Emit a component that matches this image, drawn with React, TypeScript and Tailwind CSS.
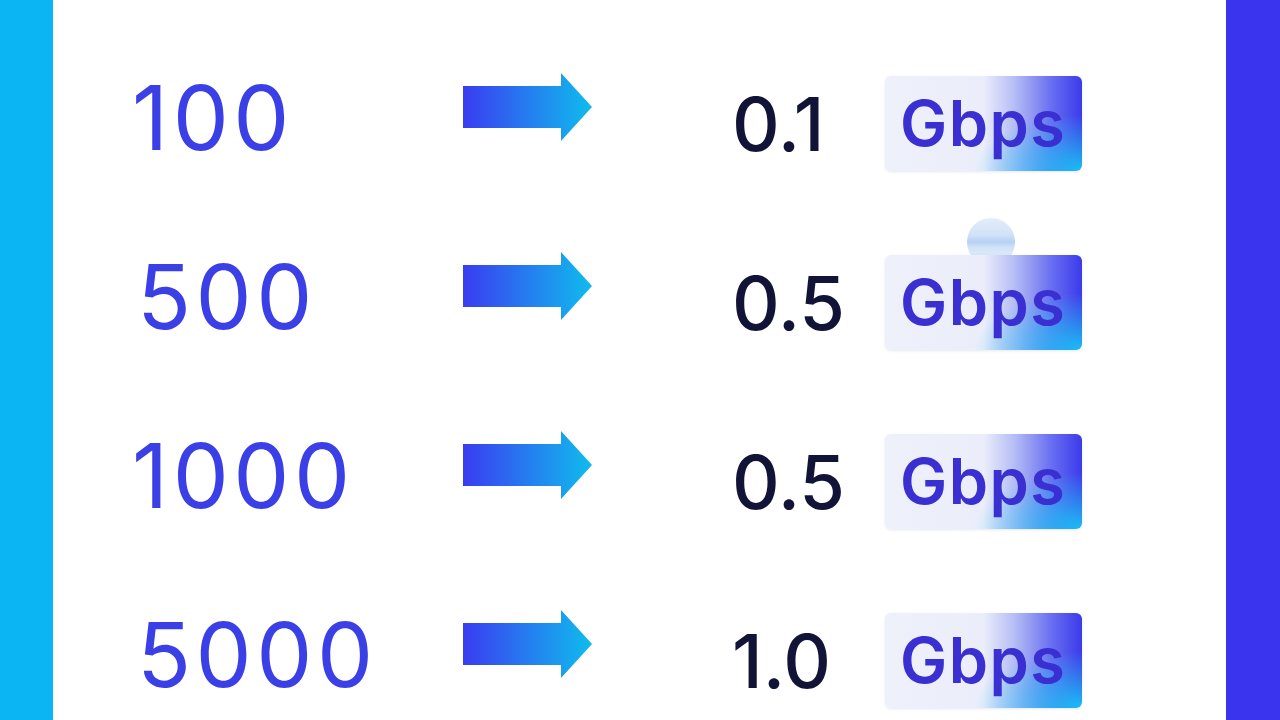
import React from 'react';

const rows = [
  { speed: '100', shift: 'ml-0', value: '0.1', blob: false },
  { speed: '500', shift: 'ml-[5px]', value: '0.5', blob: true },
  { speed: '1000', shift: 'ml-0', value: '0.5', blob: false },
  { speed: '5000', shift: 'ml-[5px]', value: '1.0', blob: false },
];

function Arrow({ id }: { id: string }) {
  return (
    <svg width="129" height="68" viewBox="0 0 129 68">
      <defs>
        <linearGradient id={id} x1="0" y1="0" x2="1" y2="0">
          <stop offset="0%" stopColor="#3a3cf0" />
          <stop offset="55%" stopColor="#2383f0" />
          <stop offset="100%" stopColor="#0fbcec" />
        </linearGradient>
      </defs>
      <path d="M0 13 H98 V0 L129 34 L98 68 V55 H0 Z" fill={`url(#${id})`} />
    </svg>
  );
}

function Badge({ blob }: { blob: boolean }) {
  return (
    <div className="relative">
      {blob && (
        <div className="absolute left-[82px] top-[-37px] h-[48px] w-[48px] rounded-full bg-[linear-gradient(180deg,#dfeaf9_0%,#c8ddf6_35%,#a8c8f0_50%,#cadff6_62%,#e6eff9_100%)] opacity-85" />
      )}
      <div className="relative flex h-[95px] w-[197px] items-center rounded-[6px] pl-[15px] bg-[radial-gradient(ellipse_55%_60%_at_100%_100%,rgba(24,196,244,0.95)_0%,rgba(24,196,244,0.5)_45%,rgba(24,196,244,0)_100%),linear-gradient(90deg,#eef0fa_0%,#ebeefa_50%,#b4bcf5_66%,#6a70f0_84%,#3b3aea_100%)] shadow-[0_1px_3px_rgba(60,70,140,0.12)]">
        <span className="text-[63px] font-semibold leading-none tracking-[1.5px] text-[#3a30d2]">Gbps</span>
      </div>
    </div>
  );
}

export default function App() {
  return (
    <div className="flex h-screen w-full overflow-hidden bg-white font-['Inter',sans-serif]">
      <div className="w-[53px] shrink-0 bg-[#0bb4f2]" />

      <main className="flex flex-1 flex-col pt-[34px]">
        {rows.map((row, i) => (
          <div key={i} className="flex h-[179px] shrink-0 items-center">
            <div className="w-[410px] shrink-0 pl-[79px]">
              <span className={`${row.shift} inline-block -translate-y-[6px] text-[89px] font-normal leading-none tracking-[4.5px] text-[#3b3fe6]`}>
                {row.speed}
              </span>
            </div>
            <div className="w-[269px] shrink-0 -translate-y-[17px]">
              <Arrow id={`arrow-grad-${i}`} />
            </div>
            <div className="w-[153px] shrink-0">
              <span className="text-[74px] font-medium leading-none text-[#111436]">{row.value}</span>
            </div>
            <Badge blob={row.blob} />
          </div>
        ))}
      </main>

      <div className="w-[54px] shrink-0 bg-[#3a34ee]" />
    </div>
  );
}
